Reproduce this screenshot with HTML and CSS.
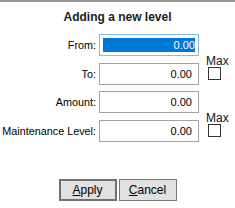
FILE: index.html
```html
<!DOCTYPE html>
<html lang="en">
<head>
    <meta charset="UTF-8">
    <title>Adding a new level</title>
    <link rel="stylesheet" href="styles.css">
</head>
<body>
<div class="dialog">
    <h1 class="title">Adding a new level</h1>

    <div class="level-form">
        <label class="field-label">From:</label>
        <div class="field field-focus"><span class="field-sel">0.00</span></div>
        <div></div>

        <label class="field-label">To:</label>
        <div class="field">0.00</div>
        <div class="max-cell"><span class="max-text">Max</span><span class="check"></span></div>

        <label class="field-label">Amount:</label>
        <div class="field">0.00</div>
        <div></div>

        <label class="field-label">Maintenance Level:</label>
        <div class="field">0.00</div>
        <div class="max-cell"><span class="max-text">Max</span><span class="check"></span></div>
    </div>

    <div class="button-row">
        <button class="btn btn-default"><u>A</u>pply</button>
        <button class="btn"><u>C</u>ancel</button>
    </div>
</div>
</body>
</html>
```

FILE: styles.css
```css
body {
    margin: 0;
    background: #fff;
    font-family: "Liberation Sans", Arial, sans-serif;
    font-size: 11px;
    color: #000;
}

.dialog {
    border-top: 2px solid #9a9a9a;
    height: 206px;
}

.title {
    margin: 0;
    padding-top: 8px;
    text-align: center;
    font-size: 12px;
    font-weight: bold;
    color: #222;
    height: 24px;
}

/* label / value / max columns */
.level-form {
    display: grid;
    grid-template-columns: 96px 100px 30px;
    grid-auto-rows: 22px;
    row-gap: 6.5px;
    column-gap: 3px;
}

.field-label {
    text-align: right;
    line-height: 22px;
    white-space: nowrap;
    font-size: 10.8px;
}

.field {
    box-sizing: border-box;
    border: 1px solid #a4a4a4;
    text-align: right;
    line-height: 20px;
    padding-right: 6px;
}

.field-focus {
    border-color: #86bdec;
    padding: 3px;
    line-height: 14px;
}

.field-sel {
    display: block;
    background: #0078d7;
    color: #fff;
}

.max-cell {
    display: flex;
    flex-direction: column;
    align-items: flex-start;
    margin-top: -8px;
    padding-left: 4px;
}

.max-text {
    font-size: 12px;
    line-height: 12px;
    color: #111;
}

.check {
    width: 11px;
    height: 11px;
    border: 1px solid #333;
    background: #fff;
    margin-left: 2px;
}

.button-row {
    display: flex;
    justify-content: center;
    gap: 2px;
    margin-top: 37px;
}

.btn {
    box-sizing: border-box;
    width: 58px;
    height: 22px;
    background: #e1e1e1;
    border: 1px solid #7a7a7a;
    font-family: "Liberation Sans", Arial, sans-serif;
    font-size: 12px;
    color: #000;
    padding: 0;
}

.btn-default {
    border: 2px solid #707070;
}
```
